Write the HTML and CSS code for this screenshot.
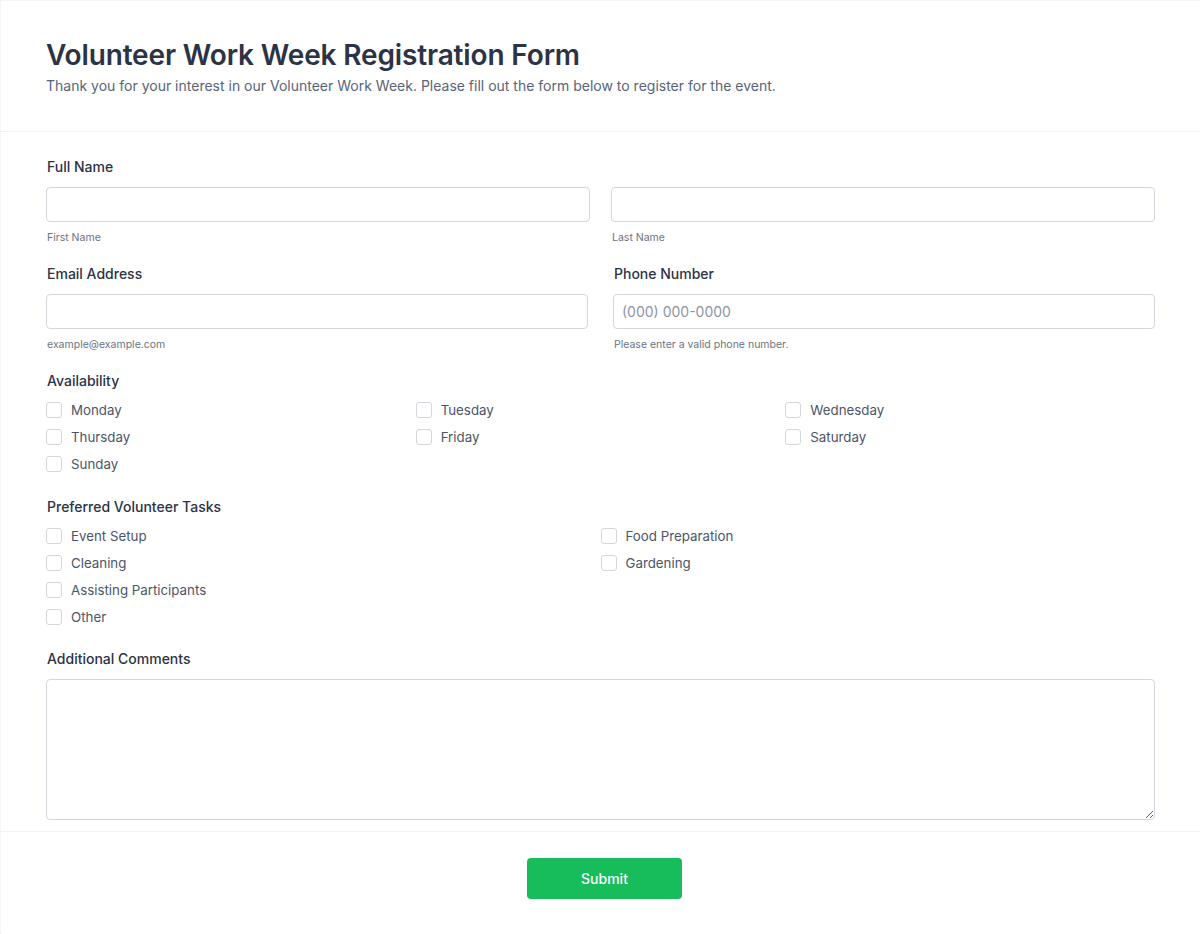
FILE: index.html
```html
<!DOCTYPE html>
<html lang="en">
<head>
  <meta charset="UTF-8">
  <meta name="viewport" content="width=device-width, initial-scale=1.0">
  <title>Volunteer Work Week Registration Form</title>
  <link rel="stylesheet" href="styles.css">
</head>
<body>
  <form class="form">
    <div class="form-header">
      <h1 class="title">Volunteer Work Week Registration Form</h1>
      <p class="subtitle">Thank you for your interest in our Volunteer Work Week. Please fill out the form below to register for the event.</p>
    </div>

    <div class="form-body">
      <div class="field">
        <label class="label">Full Name</label>
        <div class="name-row">
          <div>
            <input class="input" type="text">
            <div class="sublabel">First Name</div>
          </div>
          <div>
            <input class="input" type="text">
            <div class="sublabel">Last Name</div>
          </div>
        </div>
      </div>

      <div class="field-row">
        <div class="field">
          <label class="label">Email Address</label>
          <input class="input" type="email">
          <div class="sublabel">example@example.com</div>
        </div>
        <div class="field">
          <label class="label">Phone Number</label>
          <input class="input" type="tel" placeholder="(000) 000-0000">
          <div class="sublabel">Please enter a valid phone number.</div>
        </div>
      </div>

      <div class="field availability">
        <label class="label">Availability</label>
        <div class="options cols-3">
          <div class="col">
            <label class="option"><input type="checkbox"><span>Monday</span></label>
            <label class="option"><input type="checkbox"><span>Thursday</span></label>
            <label class="option"><input type="checkbox"><span>Sunday</span></label>
          </div>
          <div class="col">
            <label class="option"><input type="checkbox"><span>Tuesday</span></label>
            <label class="option"><input type="checkbox"><span>Friday</span></label>
          </div>
          <div class="col">
            <label class="option"><input type="checkbox"><span>Wednesday</span></label>
            <label class="option"><input type="checkbox"><span>Saturday</span></label>
          </div>
        </div>
      </div>

      <div class="field tasks">
        <label class="label">Preferred Volunteer Tasks</label>
        <div class="options cols-2">
          <div class="col">
            <label class="option"><input type="checkbox"><span>Event Setup</span></label>
            <label class="option"><input type="checkbox"><span>Cleaning</span></label>
            <label class="option"><input type="checkbox"><span>Assisting Participants</span></label>
            <label class="option"><input type="checkbox"><span>Other</span></label>
          </div>
          <div class="col">
            <label class="option"><input type="checkbox"><span>Food Preparation</span></label>
            <label class="option"><input type="checkbox"><span>Gardening</span></label>
          </div>
        </div>
      </div>

      <div class="field last">
        <label class="label">Additional Comments</label>
        <textarea class="textarea"></textarea>
      </div>
    </div>

    <div class="form-footer">
      <button class="submit" type="button">Submit</button>
    </div>
  </form>
</body>
</html>
```

FILE: styles.css
```css
body {
  margin: 0;
  padding: 0;
  font-family: Inter, "Noto Sans", sans-serif;
  background-color: #fff;
  color: #2d3446;
}

.form {
  min-height: 934px;
  box-sizing: border-box;
  border-left: 1px dotted #eceef1;
  border-top: 1px dotted #eceef1;
}

.form-header {
  padding: 37px 45px 35px 45px;
  border-bottom: 1px solid #f1f2f4;
}

.title {
  margin: 0;
  font-size: 28px;
  line-height: 34px;
  font-weight: 600;
  color: #2c3345;
  letter-spacing: -0.15px;
}

.subtitle {
  margin: 4px 0 0;
  font-size: 14px;
  line-height: 20px;
  color: #57647a;
}

.form-body {
  padding: 25px 45px 11px 45px;
}

.field {
  margin-bottom: 18px;
}

.field.availability {
  margin-bottom: 20px;
}

.field.tasks {
  margin-bottom: 19px;
}

.field.last {
  margin-bottom: 0;
}

.label {
  display: block;
  padding-left: 1px;
  margin-bottom: 10px;
  font-size: 14px;
  line-height: 20px;
  font-weight: 500;
  color: #2c3345;
}

.name-row {
  display: grid;
  grid-template-columns: 1fr 1fr;
  gap: 21px;
}

.field-row {
  display: grid;
  grid-template-columns: 1fr 1fr;
  gap: 25px;
}

.input {
  display: block;
  width: 100%;
  height: 35px;
  box-sizing: border-box;
  padding: 0 8px;
  border: 1px solid #d3d6dd;
  border-radius: 4px;
  font-family: inherit;
  font-size: 14px;
  color: #2c3345;
  background: #fff;
}

.input::placeholder {
  color: #8d95a5;
}

.sublabel {
  margin-top: 8px;
  padding-left: 1px;
  font-size: 10.5px;
  line-height: 16px;
  color: #6b7385;
}

.options {
  display: grid;
  margin-top: -5px;
}

.cols-3 {
  grid-template-columns: 1fr 1fr 1fr;
}

.cols-2 {
  grid-template-columns: 1fr 1fr;
}

.option {
  display: flex;
  align-items: center;
  height: 27px;
  font-size: 13.3px;
  color: #4b5567;
}

.option input {
  appearance: none;
  width: 16px;
  height: 16px;
  margin: 0 9px 0 0;
  border: 1px solid #d3d6dd;
  border-radius: 3px;
  background: #fff;
}

.textarea {
  display: block;
  width: 100%;
  height: 141px;
  box-sizing: border-box;
  border: 1px solid #d3d6dd;
  border-radius: 4px;
  font-family: inherit;
  font-size: 14px;
}

.form-footer {
  border-top: 1px solid #f1f2f4;
  padding: 26px 0 0 8px;
  text-align: center;
}

.submit {
  width: 155px;
  height: 41px;
  border: none;
  border-radius: 4px;
  background-color: #18bd5b;
  color: #fff;
  font-family: inherit;
  font-size: 14px;
  font-weight: 500;
  cursor: pointer;
}
```
